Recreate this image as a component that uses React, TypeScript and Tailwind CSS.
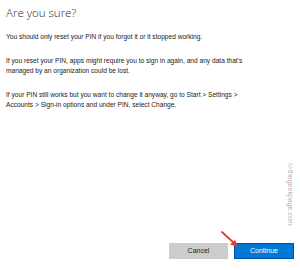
import React from "react";

export default function App() {
  return (
    <div
      className="relative w-[300px] h-[270px] bg-white overflow-hidden text-[#1f1f1f]"
      style={{ fontFamily: '"Liberation Sans", Arial, sans-serif' }}
    >
      <div className="flex flex-col pl-[6px] pt-[5px]">
        <div
          className="text-[11.5px] leading-[15px] text-[#2b2b2b] font-light"
          style={{ fontFamily: '"Open Sans", "Liberation Sans", sans-serif' }}
        >
          Are you sure?
        </div>
        <div className="mt-[12px] flex flex-col gap-[13px] text-[6.6px] leading-[10.5px] whitespace-nowrap text-[#222]">
          <p>You should only reset your PIN if you forgot it or it stopped working.</p>
          <p>
            If you reset your PIN, apps might require you to sign in again, and any data that's
            <br />
            managed by an organization could be lost.
          </p>
          <p>
            If your PIN still works but you want to change it anyway, go to Start &gt; Settings &gt;
            <br />
            Accounts &gt; Sign-in options and under PIN, select Change.
          </p>
        </div>
      </div>

      <div className="absolute left-[0px] bottom-[11px] w-[294px] flex justify-end gap-[6px]">
        <button className="w-[59px] h-[16px] bg-[#cccccc] text-[7px] text-[#222] flex items-center justify-center">
          Cancel
        </button>
        <button className="w-[60px] h-[16px] bg-[#0078d7] border border-[#00509e] text-[7px] text-white flex items-center justify-center">
          Continue
        </button>
      </div>

      <svg className="absolute left-[218px] top-[228px]" width="24" height="24" viewBox="0 0 24 24">
        <line x1="4" y1="4" x2="16" y2="15" stroke="#e53935" strokeWidth="1.8" strokeLinecap="round" />
        <polygon points="20,19 12,16.5 17,12" fill="#e53935" />
      </svg>

      <div
        className="absolute left-[287px] top-[163px] text-[7px] leading-[7px] text-[#b5b5b5] whitespace-nowrap"
        style={{ writingMode: "vertical-rl" }}
      >
        ©thegeekpage.com
      </div>
    </div>
  );
}
